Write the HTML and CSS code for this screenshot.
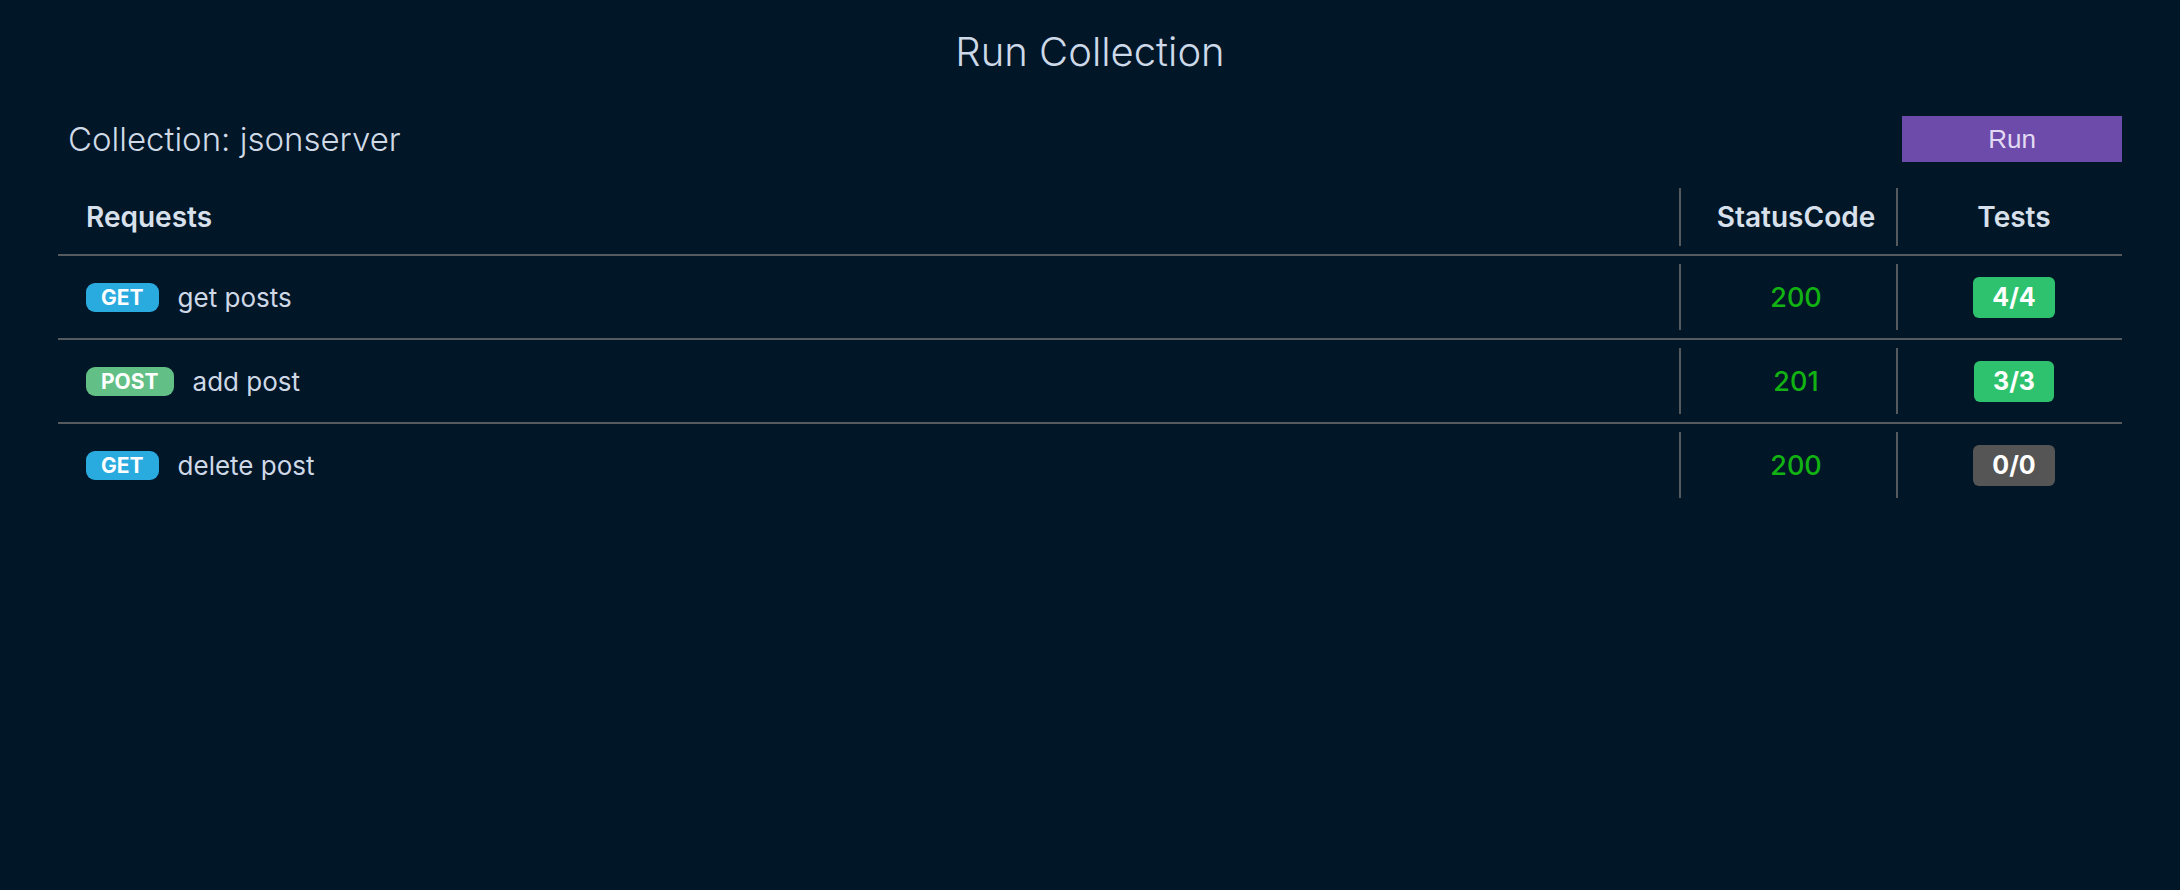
FILE: index.html
```html
<!DOCTYPE html>
<html lang="en">
<head>
<meta charset="utf-8">
<title>Run Collection</title>
<link rel="stylesheet" href="styles.css">
</head>
<body>
<main class="page">
  <h1 class="title">Run Collection</h1>
  <div class="toolbar">
    <div class="collection-name">Collection: jsonserver</div>
    <button class="run-btn">Run</button>
  </div>
  <div class="table">
    <div class="row head">
      <div class="cell c-req">Requests</div>
      <div class="cell c-status">StatusCode</div>
      <div class="cell c-tests">Tests</div>
    </div>
    <div class="row">
      <div class="cell c-req"><span class="method get">GET</span><span class="req-name">get posts</span></div>
      <div class="cell c-status"><span class="code ok">200</span></div>
      <div class="cell c-tests"><span class="tbadge pass">4/4</span></div>
    </div>
    <div class="row">
      <div class="cell c-req"><span class="method post">POST</span><span class="req-name">add post</span></div>
      <div class="cell c-status"><span class="code ok">201</span></div>
      <div class="cell c-tests"><span class="tbadge pass">3/3</span></div>
    </div>
    <div class="row">
      <div class="cell c-req"><span class="method get">GET</span><span class="req-name">delete post</span></div>
      <div class="cell c-status"><span class="code ok">200</span></div>
      <div class="cell c-tests"><span class="tbadge none">0/0</span></div>
    </div>
  </div>
</main>
</body>
</html>
```
FILE: styles.css
```css
html, body {
  margin: 0;
  padding: 0;
  background: #011627;
  height: 100%;
}
body {
  font-family: Inter, "Noto Sans", sans-serif;
  color: #d3dce8;
}
.page {
  padding: 32px 58px 0 58px;
}
.title {
  margin: 0;
  text-align: center;
  font-weight: 300;
  font-size: 40px;
  line-height: 1;
  color: #cdd9e8;
}
.toolbar {
  margin-top: 44px;
  display: flex;
  align-items: center;
  justify-content: space-between;
  height: 46px;
}
.collection-name {
  padding-left: 10px;
  font-weight: 300;
  font-size: 33px;
  color: #d0dae6;
}
.run-btn {
  width: 220px;
  height: 46px;
  border: 0;
  border-radius: 0;
  background: #6d4baa;
  color: #e2daf2;
  font-family: "Liberation Sans", Arial, sans-serif;
  font-size: 26px;
  padding: 0;
}
.table {
  margin-top: 18px;
}
.row {
  display: grid;
  grid-template-columns: 1fr 217px 226px;
  padding: 8px 0;
  border-bottom: 2px solid #555a5f;
}
.row:last-child {
  border-bottom: 0;
}
.cell {
  height: 66px;
  display: flex;
  align-items: center;
}
.head .cell {
  height: 58px;
  font-weight: 600;
  font-size: 28px;
  color: #d8e0ec;
}
.c-req {
  padding-left: 28px;
}
.c-status {
  border-left: 2px solid #555a5f;
  justify-content: center;
  padding-left: 15px;
}
.c-tests {
  border-left: 2px solid #555a5f;
  justify-content: center;
  padding-left: 8px;
}
.method {
  display: inline-block;
  height: 29px;
  line-height: 29px;
  padding: 0 15px;
  border-radius: 9px;
  color: #ffffff;
  font-weight: 700;
  font-size: 21px;
}
.method.get { background: #2aabe0; }
.method.post { background: #62bf86; }
.req-name {
  margin-left: 19px;
  font-size: 26px;
  color: #cfd8e6;
}
.code {
  font-size: 27px;
  font-weight: 500;
}
.code.ok { color: #12b212; }
.tbadge {
  display: inline-block;
  height: 41px;
  line-height: 41px;
  padding: 0 19px;
  border-radius: 6px;
  color: #ffffff;
  font-weight: 700;
  font-size: 25px;
}
.tbadge.pass { background: #2ec26f; }
.tbadge.none { background: #555555; }
```
